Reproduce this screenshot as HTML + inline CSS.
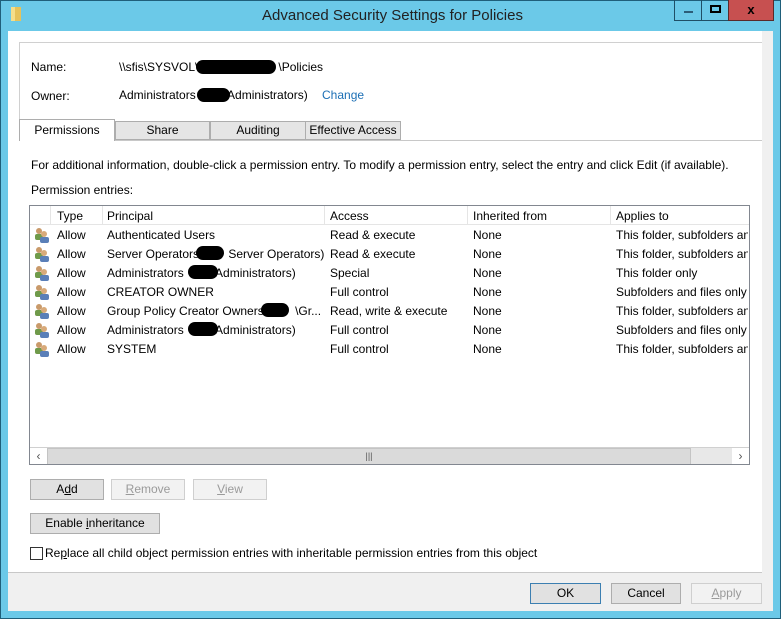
<!DOCTYPE html>
<html><head><style>
*{margin:0;padding:0;box-sizing:border-box}
body{width:781px;height:619px;background:#6bc9e8;font-family:"Liberation Sans",sans-serif;font-size:12px;color:#000;position:relative;overflow:hidden}
.a{position:absolute;white-space:nowrap}
.btn{position:absolute;height:21px;border:1px solid #adadad;background:#e1e1e1;text-align:center;line-height:19px}
.dis{border-color:#cfcfcf;background:#f2f2f2;color:#9a9a9a}
.blk{position:absolute;background:#000;border-radius:7px;height:14px}
</style></head><body>
<div class="a" style="left:0;top:0;width:781px;height:619px;border:1px solid #1f5f7a"></div>
<svg class="a" style="left:10px;top:6px" width="12" height="16"><rect x="1" y="1" width="10" height="14" fill="#e6c25a"/><rect x="1" y="1" width="4" height="14" fill="#f5de8a"/></svg>
<div class="a" style="left:262px;top:7px;font-size:15px;color:#222">Advanced Security Settings for Policies</div>
<div class="a" style="left:674px;top:0;width:28px;height:21px;border:1px solid #1f4f66;border-top:0"><div class="a" style="left:9px;top:11px;width:9px;height:2px;background:#2c5d78"></div></div>
<div class="a" style="left:701px;top:0;width:28px;height:21px;border:1px solid #1f4f66;border-top:0"><div class="a" style="left:8px;top:5px;width:11px;height:8px;border:2px solid #000"></div></div>
<div class="a" style="left:728px;top:0;width:46px;height:21px;background:#c75050;border:1px solid #5a2a2a;border-top:0;text-align:center;font-weight:bold;font-size:13px;line-height:19px">x</div>
<div class="a" style="left:8px;top:31px;width:765px;height:580px;background:#f0f0f0"></div>
<div class="a" style="left:8px;top:31px;width:754px;height:542px;background:#fff;border-bottom:1px solid #c8c8c8"></div>
<div class="a" style="left:19px;top:42px;width:743px;height:80px;border-left:1px solid #d0d0d0;border-top:1px solid #d0d0d0"></div>
<div class="a" style="left:31px;top:60px">Name:</div>
<div class="a" style="left:119px;top:60px">\\sfis\SYSVOL\<span style="display:inline-block;width:80px"></span>\Policies</div>
<div class="blk" style="left:196px;top:60px;width:80px"></div>
<div class="a" style="left:31px;top:89px">Owner:</div>
<div class="a" style="left:119px;top:88px">Administrators <span style="display:inline-block;width:28px"></span>Administrators)</div>
<div class="blk" style="left:197px;top:88px;width:33px"></div>
<div class="a" style="left:322px;top:88px;color:#1c6fb5">Change</div>
<div class="a" style="left:19px;top:140px;width:743px;height:1px;background:#c8c8c8"></div>
<div class="a" style="left:19px;top:119px;width:96px;height:22px;border:1px solid #adadad;border-bottom:0;background:#fff;text-align:center;line-height:20px">Permissions</div>
<div class="a" style="left:115px;top:121px;width:95px;height:19px;border:1px solid #adadad;background:#e5e5e5;text-align:center;line-height:17px">Share</div>
<div class="a" style="left:210px;top:121px;width:96px;height:19px;border:1px solid #adadad;background:#e5e5e5;text-align:center;line-height:17px">Auditing</div>
<div class="a" style="left:305px;top:121px;width:96px;height:19px;border:1px solid #adadad;background:#e5e5e5;text-align:center;line-height:17px">Effective Access</div>
<div class="a" style="left:31px;top:158px">For additional information, double-click a permission entry. To modify a permission entry, select the entry and click Edit (if available).</div>
<div class="a" style="left:31px;top:183px">Permission entries:</div>
<div class="a" style="left:29px;top:205px;width:721px;height:260px;border:1px solid #828790;overflow:hidden">
<div class="a" style="left:0;top:0;width:720px;height:19px;border-bottom:1px solid #e5e5e5"></div>
<div class="a" style="left:20px;top:0;width:1px;height:19px;background:#e5e5e5"></div>
<div class="a" style="left:72px;top:0;width:1px;height:19px;background:#e5e5e5"></div>
<div class="a" style="left:294px;top:0;width:1px;height:19px;background:#e5e5e5"></div>
<div class="a" style="left:437px;top:0;width:1px;height:19px;background:#e5e5e5"></div>
<div class="a" style="left:580px;top:0;width:1px;height:19px;background:#e5e5e5"></div>
<div class="a" style="left:27px;top:3px">Type</div><div class="a" style="left:77px;top:3px">Principal</div><div class="a" style="left:300px;top:3px">Access</div><div class="a" style="left:443px;top:3px">Inherited from</div><div class="a" style="left:586px;top:3px">Applies to</div>
<div class="a" style="left:0;top:241px;width:720px;height:18px;background:#e8e8e8;border-top:1px solid #d0d0d0"></div>
<div class="a" style="left:0;top:242px;width:17px;height:17px;background:#fff;text-align:center;color:#555;line-height:16px">&lsaquo;</div>
<div class="a" style="left:17px;top:242px;width:644px;height:17px;background:#dadada;border:1px solid #c4c4c4;text-align:center;line-height:14px;font-size:9px;color:#555">|||</div>
<div class="a" style="left:702px;top:242px;width:17px;height:17px;background:#fff;text-align:center;color:#555;line-height:16px">&rsaquo;</div>
</div>
<div id="rows"></div>
<script>
var r=[["Authenticated Users","Read &amp; execute","This folder, subfolders an",0],["Server Operators <span style='display:inline-block;width:26px'></span>Server Operators)","Read &amp; execute","This folder, subfolders an",1],["Administrators <span style='display:inline-block;width:28px'></span>Administrators)","Special","This folder only",1],["CREATOR OWNER","Full control","Subfolders and files only",0],["Group Policy Creator Owners <span style='display:inline-block;width:28px'></span>\\Gr...","Read, write &amp; execute","This folder, subfolders an",2],["Administrators <span style='display:inline-block;width:28px'></span>Administrators)","Full control","Subfolders and files only",1],["SYSTEM","Full control","This folder, subfolders an",0]];
var h="";r.forEach(function(e,i){var y=228+i*19;
h+='<svg class="a" style="left:34px;top:'+(y-1)+'px" width="16" height="16"><circle cx="5" cy="4" r="3" fill="#c99a6a"/><rect x="1" y="7" width="8" height="6" rx="2" fill="#6f9a4a"/><circle cx="10" cy="7" r="3" fill="#d8aa7a"/><rect x="6" y="10" width="9" height="6" rx="2" fill="#5a7fb8"/></svg>';
h+='<div class="a" style="left:57px;top:'+y+'px">Allow</div><div class="a" style="left:107px;top:'+y+'px">'+e[0]+'</div><div class="a" style="left:330px;top:'+y+'px">'+e[1]+'</div><div class="a" style="left:473px;top:'+y+'px">None</div><div class="a" style="left:616px;top:'+y+'px;width:132px;overflow:hidden">'+e[2]+'</div>';
if(e[3]==1)h+='<div class="blk" style="left:'+(i==1?196:188)+'px;top:'+(y-1)+'px;width:'+(i==1?28:30)+'px"></div>';
if(e[3]==2)h+='<div class="blk" style="left:261px;top:'+(y-1)+'px;width:28px"></div>';});
document.getElementById("rows").innerHTML=h;
</script>
<div class="btn" style="left:30px;top:479px;width:74px">A<u>d</u>d</div>
<div class="btn dis" style="left:111px;top:479px;width:74px"><u>R</u>emove</div>
<div class="btn dis" style="left:193px;top:479px;width:74px"><u>V</u>iew</div>
<div class="btn" style="left:30px;top:513px;width:130px">Enable <u>i</u>nheritance</div>
<div class="a" style="left:30px;top:547px;width:13px;height:13px;border:1px solid #333;background:#fff"></div>
<div class="a" style="left:45px;top:546px">Re<u>p</u>lace all child object permission entries with inheritable permission entries from this object</div>
<div class="btn" style="left:530px;top:583px;width:71px;border-color:#3c7fb1">OK</div>
<div class="btn" style="left:611px;top:583px;width:70px">Cancel</div>
<div class="btn dis" style="left:691px;top:583px;width:71px"><u>A</u>pply</div>
</body></html>
